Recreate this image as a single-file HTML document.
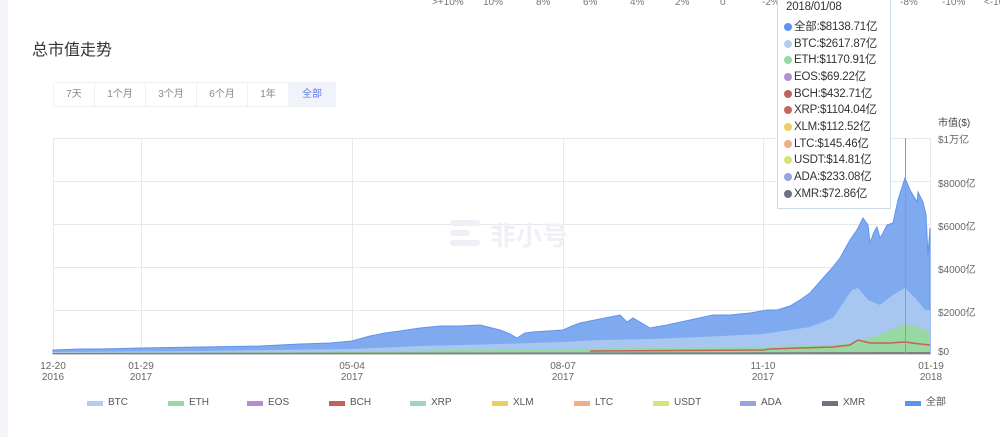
<!DOCTYPE html>
<html><head><meta charset="utf-8"><style>
body{margin:0;width:1000px;height:437px;background:#fff;position:relative;overflow:hidden;font-family:"Liberation Sans","Noto Sans CJK SC",sans-serif;}
.strip{position:absolute;left:0;top:0;width:8px;height:437px;background:#f4f5f9}
.pct{position:absolute;top:-3px;font-size:10px;color:#777}
.title{position:absolute;left:32px;top:36px;font-size:16px;color:#333}
.btns{position:absolute;left:53px;top:82px;height:23px;display:flex;border:1px solid #eef0f4;border-radius:2px}
.btns div{font-size:10px;color:#888;line-height:23px;text-align:center;border-right:1px solid #eef0f4}
.btns div.on{background:#f0f3fa;color:#5b7ce8;border-right:none}
.tip{position:absolute;left:777px;top:-4px;width:112px;height:211px;border:1px solid #c8dcee;background:rgba(255,255,255,0.95);font-size:11.5px;color:#333}
.tip .r{position:absolute;left:6px;white-space:nowrap;letter-spacing:-0.2px}
.tip .d{display:inline-block;width:8px;height:8px;border-radius:50%;margin-right:2px;vertical-align:-1px}
.lg{position:absolute;top:397px;font-size:10px;color:#555;white-space:nowrap;display:flex;align-items:center;width:80px;height:12px;line-height:12px}
.lg span{display:inline-block;width:16px;height:5px;margin-right:5px;flex:none}
.ax{position:absolute;font-size:10px;color:#666;text-align:center;line-height:11px;width:40px}
.yl{position:absolute;left:938px;font-size:10px;color:#666}
</style></head><body>
<div class="strip"></div>
<div class="pct" style="left:432px">&gt;+10%</div>
<div class="pct" style="left:483px">10%</div>
<div class="pct" style="left:536px">8%</div>
<div class="pct" style="left:583px">6%</div>
<div class="pct" style="left:630px">4%</div>
<div class="pct" style="left:675px">2%</div>
<div class="pct" style="left:720px">0</div>
<div class="pct" style="left:762px">-2%</div>
<div class="pct" style="left:900px">-8%</div>
<div class="pct" style="left:942px">-10%</div>
<div class="pct" style="left:984px">&lt;-10</div>
<div class="title">总市值走势</div>
<div class="btns">
<div style="width:40px">7天</div><div style="width:50px">1个月</div><div style="width:50px">3个月</div><div style="width:50px">6个月</div><div style="width:40px">1年</div><div class="on" style="width:46px">全部</div>
</div>
<svg style="position:absolute;left:0;top:0" width="1000" height="437">
<g stroke="#e6e8ee" stroke-width="1" fill="none">
<line x1="53" y1="138.5" x2="930" y2="138.5"/><line x1="53" y1="181.5" x2="930" y2="181.5"/><line x1="53" y1="224.5" x2="930" y2="224.5"/><line x1="53" y1="267.5" x2="930" y2="267.5"/><line x1="53" y1="310.5" x2="930" y2="310.5"/>
<line x1="53.5" y1="138" x2="53.5" y2="354"/><line x1="141.5" y1="138" x2="141.5" y2="354"/><line x1="352.5" y1="138" x2="352.5" y2="354"/><line x1="563.5" y1="138" x2="563.5" y2="354"/><line x1="763.5" y1="138" x2="763.5" y2="354"/><line x1="930.5" y1="138" x2="930.5" y2="354"/>
</g>
<g fill="#eef0f5"><rect x="450" y="220" width="30" height="6" rx="3"/><rect x="450" y="230" width="20" height="6" rx="3"/><rect x="450" y="240" width="30" height="6" rx="3"/></g>
<text x="490" y="245" font-size="26" font-weight="bold" fill="#eef0f5" font-family="Noto Sans CJK SC,sans-serif">非小号</text>
<polygon fill="#7faaf0" stroke="#5f95ec" stroke-width="1" points="53,350 80,349 100,349 141,348 200,347 260,346 300,344 330,343 352,341 370,336 385,333 400,331 420,328 440,326 460,326 480,325 500,330 510,334 517,338 525,333 533,332 548,331 563,330 572,326 580,323 600,319 620,315 627,322 633,318 640,322 650,328 667,325 690,320 713,315 730,315 750,313 767,310 777,310 790,306 800,300 810,293 817,285 825,276 833,267 840,258 850,240 857,230 863,218 868,225 870,243 874,232 877,227 880,238 883,233 887,225 893,223 898,200 905,178 910,190 917,202 918,192 923,202 926,215 928,255 930,228 930,354 53,354"/>
<polygon fill="#a8c7f0" points="53,352 200,351 352,349 420,346 500,344 563,342 600,340 650,339 700,337 763,334 790,330 810,327 833,318 845,300 852,290 858,288 868,300 880,305 893,295 905,288 917,300 925,310 930,310 930,354 53,354"/>
<polygon fill="#98d8a2" points="53,353 352,352 450,350 563,349 650,348 763,347 800,346 833,345 850,343 870,338 890,330 905,324 915,326 925,330 930,332 930,354 53,354"/>
<polyline fill="none" stroke="#c0645a" stroke-width="1.5" points="590,351 763,350 770,349 800,348 833,347 850,345 858,340 870,343 890,343 905,342 920,344 930,345"/>
<polygon fill="#7b8088" points="53,353 930,352 930,354 53,354"/>
<line x1="905.5" y1="138" x2="905.5" y2="354" stroke="#999" stroke-width="1"/>
<line x1="53" y1="354.5" x2="930" y2="354.5" stroke="#ccc"/>
</svg>
<div class="yl" style="top:114px;color:#444;font-size:10px">市值($)</div>
<div class="yl" style="top:131px">$1万亿</div>
<div class="yl" style="top:175px">$8000亿</div>
<div class="yl" style="top:218px">$6000亿</div>
<div class="yl" style="top:261px">$4000亿</div>
<div class="yl" style="top:304px">$2000亿</div>
<div class="yl" style="top:347px">$0</div>
<div class="ax" style="left:33px;top:361px">12-20<br>2016</div>
<div class="ax" style="left:121px;top:361px">01-29<br>2017</div>
<div class="ax" style="left:332px;top:361px">05-04<br>2017</div>
<div class="ax" style="left:543px;top:361px">08-07<br>2017</div>
<div class="ax" style="left:743px;top:361px">11-10<br>2017</div>
<div class="ax" style="left:911px;top:361px">01-19<br>2018</div>
<div class="tip">
<div class="r" style="top:4px;left:8px">2018/01/08</div>
<div class="r" style="top:21px"><span class="d" style="background:#5b95ee"></span>全部:$8138.71亿</div>
<div class="r" style="top:38px"><span class="d" style="background:#b3cdf2"></span>BTC:$2617.87亿</div>
<div class="r" style="top:54px"><span class="d" style="background:#98d8a2"></span>ETH:$1170.91亿</div>
<div class="r" style="top:71px"><span class="d" style="background:#b48fd0"></span>EOS:$69.22亿</div>
<div class="r" style="top:88px"><span class="d" style="background:#c0645a"></span>BCH:$432.71亿</div>
<div class="r" style="top:104px"><span class="d" style="background:#c8665e"></span>XRP:$1104.04亿</div>
<div class="r" style="top:121px"><span class="d" style="background:#ecce62"></span>XLM:$112.52亿</div>
<div class="r" style="top:138px"><span class="d" style="background:#eeb088"></span>LTC:$145.46亿</div>
<div class="r" style="top:154px"><span class="d" style="background:#d5e672"></span>USDT:$14.81亿</div>
<div class="r" style="top:171px"><span class="d" style="background:#94a4de"></span>ADA:$233.08亿</div>
<div class="r" style="top:188px"><span class="d" style="background:#6b7480"></span>XMR:$72.86亿</div>
</div>
<div class="lg" style="left:87px"><span style="background:#b3cdf2"></span>BTC</div>
<div class="lg" style="left:168px"><span style="background:#98d8a2"></span>ETH</div>
<div class="lg" style="left:247px"><span style="background:#b48fd0"></span>EOS</div>
<div class="lg" style="left:329px"><span style="background:#c0645a"></span>BCH</div>
<div class="lg" style="left:410px"><span style="background:#9ad8bc"></span>XRP</div>
<div class="lg" style="left:492px"><span style="background:#ecce62"></span>XLM</div>
<div class="lg" style="left:574px"><span style="background:#eeb088"></span>LTC</div>
<div class="lg" style="left:653px"><span style="background:#d5e672"></span>USDT</div>
<div class="lg" style="left:740px"><span style="background:#94a4de"></span>ADA</div>
<div class="lg" style="left:822px"><span style="background:#6b7480"></span>XMR</div>
<div class="lg" style="left:905px"><span style="background:#5b95ee"></span>全部</div>
</body></html>
